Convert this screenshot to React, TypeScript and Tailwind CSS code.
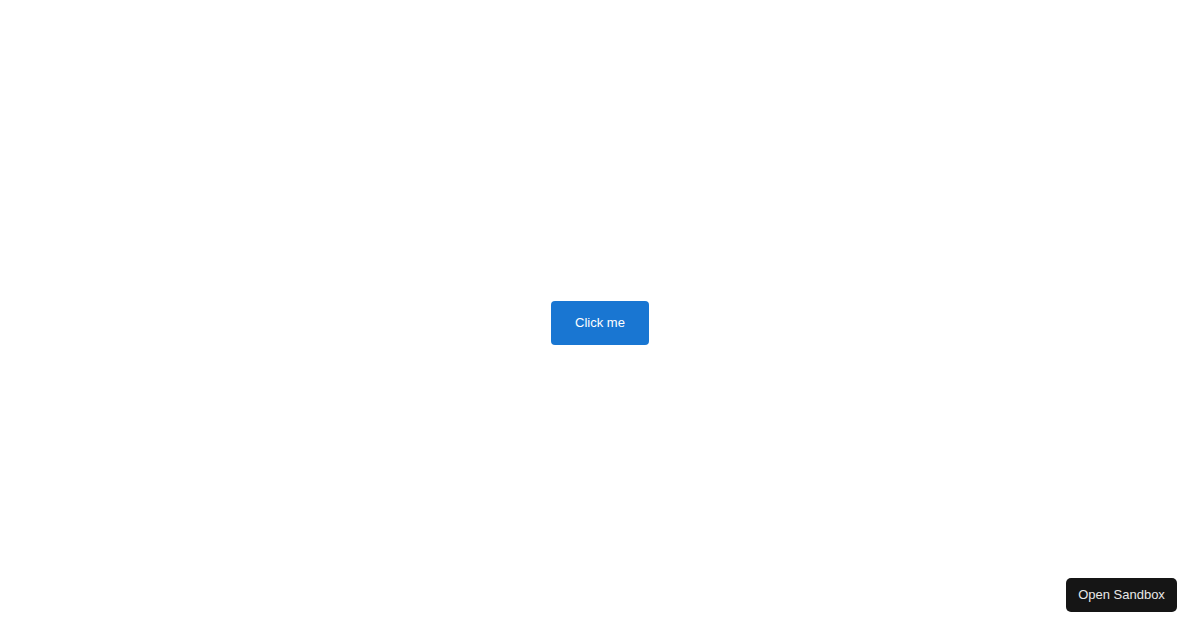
export default function App() {
  return (
    <div className="relative h-[630px] w-full bg-white pt-4 font-['Liberation_Sans',Arial,sans-serif]">
      <div className="flex h-full items-center justify-center">
        <button className="h-[44px] w-[98px] rounded-[4px] bg-[#1976d2] text-[13px] text-white">
          Click me
        </button>
      </div>
      <button className="absolute bottom-[18px] right-[23px] h-[34px] w-[111px] rounded-[5px] bg-[#151515] text-[13px] text-[#e8e8e8]">
        Open Sandbox
      </button>
    </div>
  );
}
